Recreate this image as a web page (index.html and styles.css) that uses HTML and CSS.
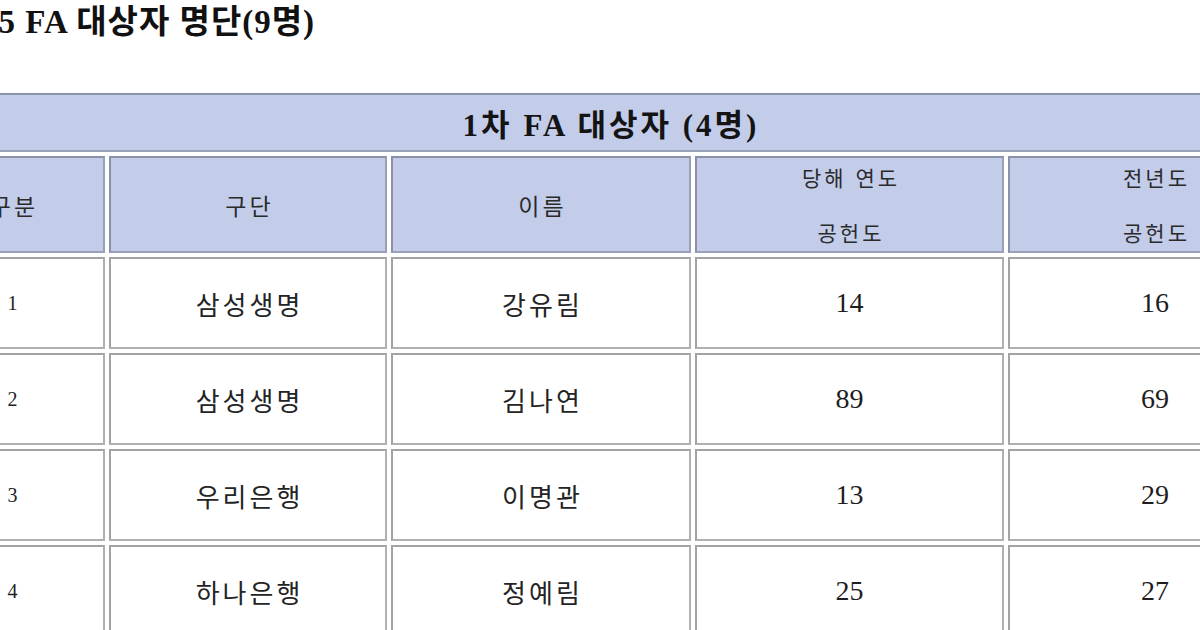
FILE: index.html
```html
<!DOCTYPE html>
<html lang="ko">
<head>
<meta charset="utf-8">
<title>2025 FA 대상자 명단</title>
<link rel="stylesheet" href="styles.css">
</head>
<body>
<div class="page">
  <h1 class="doc-title">2025 FA 대상자 명단(9명)</h1>
  <table class="fa-table">
    <colgroup>
      <col class="c-no">
      <col class="c-team">
      <col class="c-name">
      <col class="c-cur">
      <col class="c-prev">
    </colgroup>
    <thead>
      <tr class="row-title">
        <th colspan="5">1차 FA 대상자 (4명)</th>
      </tr>
      <tr class="row-head">
        <th><span class="ko">구분</span></th>
        <th><span class="ko">구단</span></th>
        <th><span class="ko">이름</span></th>
        <th><span class="line ko">당해 연도</span><span class="line ko">공헌도</span></th>
        <th><span class="line ko">전년도</span><span class="line ko">공헌도</span></th>
      </tr>
    </thead>
    <tbody>
      <tr>
        <td class="no">1</td>
        <td><span class="ko">삼성생명</span></td>
        <td><span class="ko">강유림</span></td>
        <td class="num">14</td>
        <td class="num">16</td>
      </tr>
      <tr>
        <td class="no">2</td>
        <td><span class="ko">삼성생명</span></td>
        <td><span class="ko">김나연</span></td>
        <td class="num">89</td>
        <td class="num">69</td>
      </tr>
      <tr>
        <td class="no">3</td>
        <td><span class="ko">우리은행</span></td>
        <td><span class="ko">이명관</span></td>
        <td class="num">13</td>
        <td class="num">29</td>
      </tr>
      <tr>
        <td class="no">4</td>
        <td><span class="ko">하나은행</span></td>
        <td><span class="ko">정예림</span></td>
        <td class="num">25</td>
        <td class="num">27</td>
      </tr>
    </tbody>
  </table>
</div>
</body>
</html>
```

FILE: styles.css
```css
html, body {
  margin: 0;
  padding: 0;
  background: #ffffff;
  overflow: hidden;
}

body {
  width: 1200px;
  height: 630px;
  font-family: "Liberation Serif", "Noto Sans CJK KR", serif;
  color: #1e1e1e;
}

.page {
  width: 1200px;
  height: 630px;
  overflow: hidden;
}

.doc-title {
  margin: 0 0 0 -54px;
  height: 44px;
  font-size: 33px;
  line-height: 44px;
  font-weight: bold;
  letter-spacing: 1px;
  white-space: nowrap;
  color: #111;
}

.fa-table {
  margin: 45px 0 0 -84px;
  border-collapse: separate;
  border-spacing: 4px;
  table-layout: fixed;
  width: 1390px;
}

.c-no { width: 185px; }
.c-team { width: 278px; }
.c-name { width: 300px; }
.c-cur { width: 309px; }
.c-prev { width: 294px; }

.fa-table th,
.fa-table td {
  box-sizing: border-box;
  padding: 0;
  text-align: center;
  vertical-align: middle;
  white-space: nowrap;
}

.fa-table th {
  background: #c3cdea;
  border: 2px solid #8b91a8;
  border-right-color: #9aa0b5;
  border-bottom-color: #9aa0b5;
  font-weight: normal;
  color: #2a2a2a;
}

.row-title th {
  height: 59px;
  font-size: 31px;
  font-weight: bold;
  letter-spacing: 3px;
  color: #141414;
}

.row-head th {
  height: 97px;
  font-size: 23px;
}

.ko {
  font-family: "Noto Sans CJK KR", "Liberation Sans", sans-serif;
  letter-spacing: 3px;
  padding-left: 3px;
}

.row-head .line {
  display: block;
  font-size: 21px;
  line-height: 28px;
}

.row-head .line + .line {
  margin-top: 27px;
}

.fa-table td {
  height: 92px;
  background: #ffffff;
  border: 2px solid #a3a3a3;
  border-right-color: #b0b0b0;
  border-bottom-color: #b0b0b0;
  font-size: 26px;
  color: #242424;
}

.fa-table td .ko {
  letter-spacing: 3px;
  padding-left: 3px;
}

.fa-table td.num {
  font-size: 28px;
  color: #1e1e1e;
}

.fa-table td.no {
  font-size: 20px;
  color: #1e1e1e;
}
```
